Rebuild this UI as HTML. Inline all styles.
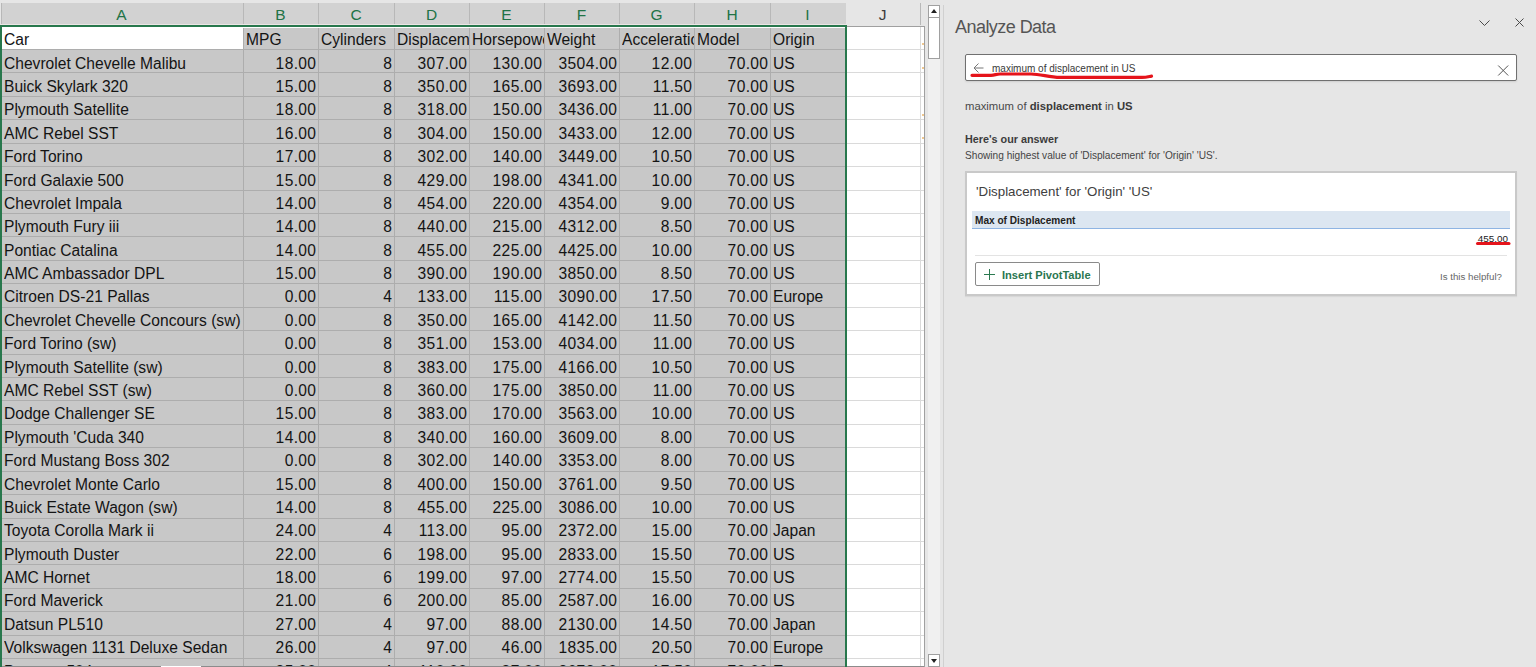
<!DOCTYPE html><html><head><meta charset="utf-8"><style>
*{margin:0;padding:0;box-sizing:border-box}
html,body{width:1536px;height:667px;overflow:hidden;background:#e6e6e6;font-family:"Liberation Sans",sans-serif;position:relative}
.a{position:absolute}
.t{position:absolute;white-space:nowrap;overflow:hidden;font-size:15.6px;line-height:18px;color:#141414}
.r{text-align:right}
.hl{position:absolute;font-size:15.5px;line-height:18px;text-align:center;color:#217346}

</style></head><body>
<div class="a" style="left:0;top:0;width:925px;height:3px;background:#e6e6e6"></div>
<div class="a" style="left:0;top:3px;width:846px;height:22px;background:#d2d2d2"></div>
<div class="a" style="left:846px;top:3px;width:79px;height:23px;background:#e6e6e6"></div>
<div class="a" style="left:243px;top:3px;width:1px;height:22px;background:#b8b8b8"></div>
<div class="a" style="left:318px;top:3px;width:1px;height:22px;background:#b8b8b8"></div>
<div class="a" style="left:394px;top:3px;width:1px;height:22px;background:#b8b8b8"></div>
<div class="a" style="left:469px;top:3px;width:1px;height:22px;background:#b8b8b8"></div>
<div class="a" style="left:544px;top:3px;width:1px;height:22px;background:#b8b8b8"></div>
<div class="a" style="left:619px;top:3px;width:1px;height:22px;background:#b8b8b8"></div>
<div class="a" style="left:694px;top:3px;width:1px;height:22px;background:#b8b8b8"></div>
<div class="a" style="left:770px;top:3px;width:1px;height:22px;background:#b8b8b8"></div>
<div class="a" style="left:920px;top:3px;width:1px;height:22px;background:#b8b8b8"></div>
<div class="a" style="left:0;top:3px;width:1px;height:22px;background:#e6e6e6"></div>
<div class="a" style="left:1px;top:3px;width:1px;height:22px;background:#b8b8b8"></div>
<div class="hl" style="left:0px;top:6px;width:243px;color:#217346">A</div>
<div class="hl" style="left:243px;top:6px;width:75px;color:#217346">B</div>
<div class="hl" style="left:318px;top:6px;width:76px;color:#217346">C</div>
<div class="hl" style="left:394px;top:6px;width:75px;color:#217346">D</div>
<div class="hl" style="left:469px;top:6px;width:75px;color:#217346">E</div>
<div class="hl" style="left:544px;top:6px;width:75px;color:#217346">F</div>
<div class="hl" style="left:619px;top:6px;width:75px;color:#217346">G</div>
<div class="hl" style="left:694px;top:6px;width:76px;color:#217346">H</div>
<div class="hl" style="left:770px;top:6px;width:75px;color:#217346">I</div>
<div class="hl" style="left:845px;top:6px;width:75px;color:#3c3c3c">J</div>
<div class="a" style="left:0;top:27px;width:924px;height:639px;background:#fff"></div>
<div class="a" style="left:2px;top:28px;width:843px;height:638px;background:#c8c8c8"></div>
<div class="a" style="left:2px;top:27px;width:241px;height:22px;background:#fff"></div>
<div class="a" style="left:847px;top:49px;width:77px;height:1px;background:#dadada"></div>
<div class="a" style="left:2px;top:49px;width:843px;height:1px;background:#adadad"></div>
<div class="a" style="left:847px;top:72px;width:77px;height:1px;background:#dadada"></div>
<div class="a" style="left:2px;top:72px;width:843px;height:1px;background:#adadad"></div>
<div class="a" style="left:847px;top:96px;width:77px;height:1px;background:#dadada"></div>
<div class="a" style="left:2px;top:96px;width:843px;height:1px;background:#adadad"></div>
<div class="a" style="left:847px;top:119px;width:77px;height:1px;background:#dadada"></div>
<div class="a" style="left:2px;top:119px;width:843px;height:1px;background:#adadad"></div>
<div class="a" style="left:847px;top:143px;width:77px;height:1px;background:#dadada"></div>
<div class="a" style="left:2px;top:143px;width:843px;height:1px;background:#adadad"></div>
<div class="a" style="left:847px;top:166px;width:77px;height:1px;background:#dadada"></div>
<div class="a" style="left:2px;top:166px;width:843px;height:1px;background:#adadad"></div>
<div class="a" style="left:847px;top:190px;width:77px;height:1px;background:#dadada"></div>
<div class="a" style="left:2px;top:190px;width:843px;height:1px;background:#adadad"></div>
<div class="a" style="left:847px;top:213px;width:77px;height:1px;background:#dadada"></div>
<div class="a" style="left:2px;top:213px;width:843px;height:1px;background:#adadad"></div>
<div class="a" style="left:847px;top:236px;width:77px;height:1px;background:#dadada"></div>
<div class="a" style="left:2px;top:236px;width:843px;height:1px;background:#adadad"></div>
<div class="a" style="left:847px;top:260px;width:77px;height:1px;background:#dadada"></div>
<div class="a" style="left:2px;top:260px;width:843px;height:1px;background:#adadad"></div>
<div class="a" style="left:847px;top:283px;width:77px;height:1px;background:#dadada"></div>
<div class="a" style="left:2px;top:283px;width:843px;height:1px;background:#adadad"></div>
<div class="a" style="left:847px;top:307px;width:77px;height:1px;background:#dadada"></div>
<div class="a" style="left:2px;top:307px;width:843px;height:1px;background:#adadad"></div>
<div class="a" style="left:847px;top:330px;width:77px;height:1px;background:#dadada"></div>
<div class="a" style="left:2px;top:330px;width:843px;height:1px;background:#adadad"></div>
<div class="a" style="left:847px;top:354px;width:77px;height:1px;background:#dadada"></div>
<div class="a" style="left:2px;top:354px;width:843px;height:1px;background:#adadad"></div>
<div class="a" style="left:847px;top:377px;width:77px;height:1px;background:#dadada"></div>
<div class="a" style="left:2px;top:377px;width:843px;height:1px;background:#adadad"></div>
<div class="a" style="left:847px;top:400px;width:77px;height:1px;background:#dadada"></div>
<div class="a" style="left:2px;top:400px;width:843px;height:1px;background:#adadad"></div>
<div class="a" style="left:847px;top:424px;width:77px;height:1px;background:#dadada"></div>
<div class="a" style="left:2px;top:424px;width:843px;height:1px;background:#adadad"></div>
<div class="a" style="left:847px;top:447px;width:77px;height:1px;background:#dadada"></div>
<div class="a" style="left:2px;top:447px;width:843px;height:1px;background:#adadad"></div>
<div class="a" style="left:847px;top:471px;width:77px;height:1px;background:#dadada"></div>
<div class="a" style="left:2px;top:471px;width:843px;height:1px;background:#adadad"></div>
<div class="a" style="left:847px;top:494px;width:77px;height:1px;background:#dadada"></div>
<div class="a" style="left:2px;top:494px;width:843px;height:1px;background:#adadad"></div>
<div class="a" style="left:847px;top:518px;width:77px;height:1px;background:#dadada"></div>
<div class="a" style="left:2px;top:518px;width:843px;height:1px;background:#adadad"></div>
<div class="a" style="left:847px;top:541px;width:77px;height:1px;background:#dadada"></div>
<div class="a" style="left:2px;top:541px;width:843px;height:1px;background:#adadad"></div>
<div class="a" style="left:847px;top:564px;width:77px;height:1px;background:#dadada"></div>
<div class="a" style="left:2px;top:564px;width:843px;height:1px;background:#adadad"></div>
<div class="a" style="left:847px;top:588px;width:77px;height:1px;background:#dadada"></div>
<div class="a" style="left:2px;top:588px;width:843px;height:1px;background:#adadad"></div>
<div class="a" style="left:847px;top:611px;width:77px;height:1px;background:#dadada"></div>
<div class="a" style="left:2px;top:611px;width:843px;height:1px;background:#adadad"></div>
<div class="a" style="left:847px;top:635px;width:77px;height:1px;background:#dadada"></div>
<div class="a" style="left:2px;top:635px;width:843px;height:1px;background:#adadad"></div>
<div class="a" style="left:847px;top:658px;width:77px;height:1px;background:#dadada"></div>
<div class="a" style="left:2px;top:658px;width:843px;height:1px;background:#adadad"></div>
<div class="a" style="left:243px;top:28px;width:1px;height:638px;background:#adadad"></div>
<div class="a" style="left:318px;top:28px;width:1px;height:638px;background:#adadad"></div>
<div class="a" style="left:394px;top:28px;width:1px;height:638px;background:#adadad"></div>
<div class="a" style="left:469px;top:28px;width:1px;height:638px;background:#adadad"></div>
<div class="a" style="left:544px;top:28px;width:1px;height:638px;background:#adadad"></div>
<div class="a" style="left:619px;top:28px;width:1px;height:638px;background:#adadad"></div>
<div class="a" style="left:694px;top:28px;width:1px;height:638px;background:#adadad"></div>
<div class="a" style="left:770px;top:28px;width:1px;height:638px;background:#adadad"></div>
<div class="a" style="left:920px;top:27px;width:1px;height:639px;background:#dadada"></div>
<div class="t" style="left:4px;top:31px;width:240px">Car</div>
<div class="t" style="left:246px;top:31px;width:72px">MPG</div>
<div class="t" style="left:321px;top:31px;width:73px">Cylinders</div>
<div class="t" style="left:397px;top:31px;width:72px">Displacement</div>
<div class="t" style="left:472px;top:31px;width:72px">Horsepower</div>
<div class="t" style="left:547px;top:31px;width:72px">Weight</div>
<div class="t" style="left:622px;top:31px;width:72px">Acceleration</div>
<div class="t" style="left:697px;top:31px;width:73px">Model</div>
<div class="t" style="left:773px;top:31px;width:72px">Origin</div>
<div class="t" style="left:4px;top:55px;width:240px">Chevrolet Chevelle Malibu</div>
<div class="t r" style="left:244px;top:55px;width:72.4px;letter-spacing:0.35px">18.00</div>
<div class="t r" style="left:319px;top:55px;width:73.4px;letter-spacing:0.35px">8</div>
<div class="t r" style="left:395px;top:55px;width:72.4px;letter-spacing:0.35px">307.00</div>
<div class="t r" style="left:470px;top:55px;width:72.4px;letter-spacing:0.35px">130.00</div>
<div class="t r" style="left:545px;top:55px;width:72.4px;letter-spacing:0.35px">3504.00</div>
<div class="t r" style="left:620px;top:55px;width:72.4px;letter-spacing:0.35px">12.00</div>
<div class="t r" style="left:695px;top:55px;width:73.4px;letter-spacing:0.35px">70.00</div>
<div class="t" style="left:773px;top:55px;width:72px">US</div>
<div class="t" style="left:4px;top:78px;width:240px">Buick Skylark 320</div>
<div class="t r" style="left:244px;top:78px;width:72.4px;letter-spacing:0.35px">15.00</div>
<div class="t r" style="left:319px;top:78px;width:73.4px;letter-spacing:0.35px">8</div>
<div class="t r" style="left:395px;top:78px;width:72.4px;letter-spacing:0.35px">350.00</div>
<div class="t r" style="left:470px;top:78px;width:72.4px;letter-spacing:0.35px">165.00</div>
<div class="t r" style="left:545px;top:78px;width:72.4px;letter-spacing:0.35px">3693.00</div>
<div class="t r" style="left:620px;top:78px;width:72.4px;letter-spacing:0.35px">11.50</div>
<div class="t r" style="left:695px;top:78px;width:73.4px;letter-spacing:0.35px">70.00</div>
<div class="t" style="left:773px;top:78px;width:72px">US</div>
<div class="t" style="left:4px;top:101px;width:240px">Plymouth Satellite</div>
<div class="t r" style="left:244px;top:101px;width:72.4px;letter-spacing:0.35px">18.00</div>
<div class="t r" style="left:319px;top:101px;width:73.4px;letter-spacing:0.35px">8</div>
<div class="t r" style="left:395px;top:101px;width:72.4px;letter-spacing:0.35px">318.00</div>
<div class="t r" style="left:470px;top:101px;width:72.4px;letter-spacing:0.35px">150.00</div>
<div class="t r" style="left:545px;top:101px;width:72.4px;letter-spacing:0.35px">3436.00</div>
<div class="t r" style="left:620px;top:101px;width:72.4px;letter-spacing:0.35px">11.00</div>
<div class="t r" style="left:695px;top:101px;width:73.4px;letter-spacing:0.35px">70.00</div>
<div class="t" style="left:773px;top:101px;width:72px">US</div>
<div class="t" style="left:4px;top:125px;width:240px">AMC Rebel SST</div>
<div class="t r" style="left:244px;top:125px;width:72.4px;letter-spacing:0.35px">16.00</div>
<div class="t r" style="left:319px;top:125px;width:73.4px;letter-spacing:0.35px">8</div>
<div class="t r" style="left:395px;top:125px;width:72.4px;letter-spacing:0.35px">304.00</div>
<div class="t r" style="left:470px;top:125px;width:72.4px;letter-spacing:0.35px">150.00</div>
<div class="t r" style="left:545px;top:125px;width:72.4px;letter-spacing:0.35px">3433.00</div>
<div class="t r" style="left:620px;top:125px;width:72.4px;letter-spacing:0.35px">12.00</div>
<div class="t r" style="left:695px;top:125px;width:73.4px;letter-spacing:0.35px">70.00</div>
<div class="t" style="left:773px;top:125px;width:72px">US</div>
<div class="t" style="left:4px;top:148px;width:240px">Ford Torino</div>
<div class="t r" style="left:244px;top:148px;width:72.4px;letter-spacing:0.35px">17.00</div>
<div class="t r" style="left:319px;top:148px;width:73.4px;letter-spacing:0.35px">8</div>
<div class="t r" style="left:395px;top:148px;width:72.4px;letter-spacing:0.35px">302.00</div>
<div class="t r" style="left:470px;top:148px;width:72.4px;letter-spacing:0.35px">140.00</div>
<div class="t r" style="left:545px;top:148px;width:72.4px;letter-spacing:0.35px">3449.00</div>
<div class="t r" style="left:620px;top:148px;width:72.4px;letter-spacing:0.35px">10.50</div>
<div class="t r" style="left:695px;top:148px;width:73.4px;letter-spacing:0.35px">70.00</div>
<div class="t" style="left:773px;top:148px;width:72px">US</div>
<div class="t" style="left:4px;top:172px;width:240px">Ford Galaxie 500</div>
<div class="t r" style="left:244px;top:172px;width:72.4px;letter-spacing:0.35px">15.00</div>
<div class="t r" style="left:319px;top:172px;width:73.4px;letter-spacing:0.35px">8</div>
<div class="t r" style="left:395px;top:172px;width:72.4px;letter-spacing:0.35px">429.00</div>
<div class="t r" style="left:470px;top:172px;width:72.4px;letter-spacing:0.35px">198.00</div>
<div class="t r" style="left:545px;top:172px;width:72.4px;letter-spacing:0.35px">4341.00</div>
<div class="t r" style="left:620px;top:172px;width:72.4px;letter-spacing:0.35px">10.00</div>
<div class="t r" style="left:695px;top:172px;width:73.4px;letter-spacing:0.35px">70.00</div>
<div class="t" style="left:773px;top:172px;width:72px">US</div>
<div class="t" style="left:4px;top:195px;width:240px">Chevrolet Impala</div>
<div class="t r" style="left:244px;top:195px;width:72.4px;letter-spacing:0.35px">14.00</div>
<div class="t r" style="left:319px;top:195px;width:73.4px;letter-spacing:0.35px">8</div>
<div class="t r" style="left:395px;top:195px;width:72.4px;letter-spacing:0.35px">454.00</div>
<div class="t r" style="left:470px;top:195px;width:72.4px;letter-spacing:0.35px">220.00</div>
<div class="t r" style="left:545px;top:195px;width:72.4px;letter-spacing:0.35px">4354.00</div>
<div class="t r" style="left:620px;top:195px;width:72.4px;letter-spacing:0.35px">9.00</div>
<div class="t r" style="left:695px;top:195px;width:73.4px;letter-spacing:0.35px">70.00</div>
<div class="t" style="left:773px;top:195px;width:72px">US</div>
<div class="t" style="left:4px;top:218px;width:240px">Plymouth Fury iii</div>
<div class="t r" style="left:244px;top:218px;width:72.4px;letter-spacing:0.35px">14.00</div>
<div class="t r" style="left:319px;top:218px;width:73.4px;letter-spacing:0.35px">8</div>
<div class="t r" style="left:395px;top:218px;width:72.4px;letter-spacing:0.35px">440.00</div>
<div class="t r" style="left:470px;top:218px;width:72.4px;letter-spacing:0.35px">215.00</div>
<div class="t r" style="left:545px;top:218px;width:72.4px;letter-spacing:0.35px">4312.00</div>
<div class="t r" style="left:620px;top:218px;width:72.4px;letter-spacing:0.35px">8.50</div>
<div class="t r" style="left:695px;top:218px;width:73.4px;letter-spacing:0.35px">70.00</div>
<div class="t" style="left:773px;top:218px;width:72px">US</div>
<div class="t" style="left:4px;top:242px;width:240px">Pontiac Catalina</div>
<div class="t r" style="left:244px;top:242px;width:72.4px;letter-spacing:0.35px">14.00</div>
<div class="t r" style="left:319px;top:242px;width:73.4px;letter-spacing:0.35px">8</div>
<div class="t r" style="left:395px;top:242px;width:72.4px;letter-spacing:0.35px">455.00</div>
<div class="t r" style="left:470px;top:242px;width:72.4px;letter-spacing:0.35px">225.00</div>
<div class="t r" style="left:545px;top:242px;width:72.4px;letter-spacing:0.35px">4425.00</div>
<div class="t r" style="left:620px;top:242px;width:72.4px;letter-spacing:0.35px">10.00</div>
<div class="t r" style="left:695px;top:242px;width:73.4px;letter-spacing:0.35px">70.00</div>
<div class="t" style="left:773px;top:242px;width:72px">US</div>
<div class="t" style="left:4px;top:265px;width:240px">AMC Ambassador DPL</div>
<div class="t r" style="left:244px;top:265px;width:72.4px;letter-spacing:0.35px">15.00</div>
<div class="t r" style="left:319px;top:265px;width:73.4px;letter-spacing:0.35px">8</div>
<div class="t r" style="left:395px;top:265px;width:72.4px;letter-spacing:0.35px">390.00</div>
<div class="t r" style="left:470px;top:265px;width:72.4px;letter-spacing:0.35px">190.00</div>
<div class="t r" style="left:545px;top:265px;width:72.4px;letter-spacing:0.35px">3850.00</div>
<div class="t r" style="left:620px;top:265px;width:72.4px;letter-spacing:0.35px">8.50</div>
<div class="t r" style="left:695px;top:265px;width:73.4px;letter-spacing:0.35px">70.00</div>
<div class="t" style="left:773px;top:265px;width:72px">US</div>
<div class="t" style="left:4px;top:288px;width:240px">Citroen DS-21 Pallas</div>
<div class="t r" style="left:244px;top:288px;width:72.4px;letter-spacing:0.35px">0.00</div>
<div class="t r" style="left:319px;top:288px;width:73.4px;letter-spacing:0.35px">4</div>
<div class="t r" style="left:395px;top:288px;width:72.4px;letter-spacing:0.35px">133.00</div>
<div class="t r" style="left:470px;top:288px;width:72.4px;letter-spacing:0.35px">115.00</div>
<div class="t r" style="left:545px;top:288px;width:72.4px;letter-spacing:0.35px">3090.00</div>
<div class="t r" style="left:620px;top:288px;width:72.4px;letter-spacing:0.35px">17.50</div>
<div class="t r" style="left:695px;top:288px;width:73.4px;letter-spacing:0.35px">70.00</div>
<div class="t" style="left:773px;top:288px;width:72px">Europe</div>
<div class="t" style="left:4px;top:312px;width:240px">Chevrolet Chevelle Concours (sw)</div>
<div class="t r" style="left:244px;top:312px;width:72.4px;letter-spacing:0.35px">0.00</div>
<div class="t r" style="left:319px;top:312px;width:73.4px;letter-spacing:0.35px">8</div>
<div class="t r" style="left:395px;top:312px;width:72.4px;letter-spacing:0.35px">350.00</div>
<div class="t r" style="left:470px;top:312px;width:72.4px;letter-spacing:0.35px">165.00</div>
<div class="t r" style="left:545px;top:312px;width:72.4px;letter-spacing:0.35px">4142.00</div>
<div class="t r" style="left:620px;top:312px;width:72.4px;letter-spacing:0.35px">11.50</div>
<div class="t r" style="left:695px;top:312px;width:73.4px;letter-spacing:0.35px">70.00</div>
<div class="t" style="left:773px;top:312px;width:72px">US</div>
<div class="t" style="left:4px;top:335px;width:240px">Ford Torino (sw)</div>
<div class="t r" style="left:244px;top:335px;width:72.4px;letter-spacing:0.35px">0.00</div>
<div class="t r" style="left:319px;top:335px;width:73.4px;letter-spacing:0.35px">8</div>
<div class="t r" style="left:395px;top:335px;width:72.4px;letter-spacing:0.35px">351.00</div>
<div class="t r" style="left:470px;top:335px;width:72.4px;letter-spacing:0.35px">153.00</div>
<div class="t r" style="left:545px;top:335px;width:72.4px;letter-spacing:0.35px">4034.00</div>
<div class="t r" style="left:620px;top:335px;width:72.4px;letter-spacing:0.35px">11.00</div>
<div class="t r" style="left:695px;top:335px;width:73.4px;letter-spacing:0.35px">70.00</div>
<div class="t" style="left:773px;top:335px;width:72px">US</div>
<div class="t" style="left:4px;top:359px;width:240px">Plymouth Satellite (sw)</div>
<div class="t r" style="left:244px;top:359px;width:72.4px;letter-spacing:0.35px">0.00</div>
<div class="t r" style="left:319px;top:359px;width:73.4px;letter-spacing:0.35px">8</div>
<div class="t r" style="left:395px;top:359px;width:72.4px;letter-spacing:0.35px">383.00</div>
<div class="t r" style="left:470px;top:359px;width:72.4px;letter-spacing:0.35px">175.00</div>
<div class="t r" style="left:545px;top:359px;width:72.4px;letter-spacing:0.35px">4166.00</div>
<div class="t r" style="left:620px;top:359px;width:72.4px;letter-spacing:0.35px">10.50</div>
<div class="t r" style="left:695px;top:359px;width:73.4px;letter-spacing:0.35px">70.00</div>
<div class="t" style="left:773px;top:359px;width:72px">US</div>
<div class="t" style="left:4px;top:382px;width:240px">AMC Rebel SST (sw)</div>
<div class="t r" style="left:244px;top:382px;width:72.4px;letter-spacing:0.35px">0.00</div>
<div class="t r" style="left:319px;top:382px;width:73.4px;letter-spacing:0.35px">8</div>
<div class="t r" style="left:395px;top:382px;width:72.4px;letter-spacing:0.35px">360.00</div>
<div class="t r" style="left:470px;top:382px;width:72.4px;letter-spacing:0.35px">175.00</div>
<div class="t r" style="left:545px;top:382px;width:72.4px;letter-spacing:0.35px">3850.00</div>
<div class="t r" style="left:620px;top:382px;width:72.4px;letter-spacing:0.35px">11.00</div>
<div class="t r" style="left:695px;top:382px;width:73.4px;letter-spacing:0.35px">70.00</div>
<div class="t" style="left:773px;top:382px;width:72px">US</div>
<div class="t" style="left:4px;top:405px;width:240px">Dodge Challenger SE</div>
<div class="t r" style="left:244px;top:405px;width:72.4px;letter-spacing:0.35px">15.00</div>
<div class="t r" style="left:319px;top:405px;width:73.4px;letter-spacing:0.35px">8</div>
<div class="t r" style="left:395px;top:405px;width:72.4px;letter-spacing:0.35px">383.00</div>
<div class="t r" style="left:470px;top:405px;width:72.4px;letter-spacing:0.35px">170.00</div>
<div class="t r" style="left:545px;top:405px;width:72.4px;letter-spacing:0.35px">3563.00</div>
<div class="t r" style="left:620px;top:405px;width:72.4px;letter-spacing:0.35px">10.00</div>
<div class="t r" style="left:695px;top:405px;width:73.4px;letter-spacing:0.35px">70.00</div>
<div class="t" style="left:773px;top:405px;width:72px">US</div>
<div class="t" style="left:4px;top:429px;width:240px">Plymouth 'Cuda 340</div>
<div class="t r" style="left:244px;top:429px;width:72.4px;letter-spacing:0.35px">14.00</div>
<div class="t r" style="left:319px;top:429px;width:73.4px;letter-spacing:0.35px">8</div>
<div class="t r" style="left:395px;top:429px;width:72.4px;letter-spacing:0.35px">340.00</div>
<div class="t r" style="left:470px;top:429px;width:72.4px;letter-spacing:0.35px">160.00</div>
<div class="t r" style="left:545px;top:429px;width:72.4px;letter-spacing:0.35px">3609.00</div>
<div class="t r" style="left:620px;top:429px;width:72.4px;letter-spacing:0.35px">8.00</div>
<div class="t r" style="left:695px;top:429px;width:73.4px;letter-spacing:0.35px">70.00</div>
<div class="t" style="left:773px;top:429px;width:72px">US</div>
<div class="t" style="left:4px;top:452px;width:240px">Ford Mustang Boss 302</div>
<div class="t r" style="left:244px;top:452px;width:72.4px;letter-spacing:0.35px">0.00</div>
<div class="t r" style="left:319px;top:452px;width:73.4px;letter-spacing:0.35px">8</div>
<div class="t r" style="left:395px;top:452px;width:72.4px;letter-spacing:0.35px">302.00</div>
<div class="t r" style="left:470px;top:452px;width:72.4px;letter-spacing:0.35px">140.00</div>
<div class="t r" style="left:545px;top:452px;width:72.4px;letter-spacing:0.35px">3353.00</div>
<div class="t r" style="left:620px;top:452px;width:72.4px;letter-spacing:0.35px">8.00</div>
<div class="t r" style="left:695px;top:452px;width:73.4px;letter-spacing:0.35px">70.00</div>
<div class="t" style="left:773px;top:452px;width:72px">US</div>
<div class="t" style="left:4px;top:476px;width:240px">Chevrolet Monte Carlo</div>
<div class="t r" style="left:244px;top:476px;width:72.4px;letter-spacing:0.35px">15.00</div>
<div class="t r" style="left:319px;top:476px;width:73.4px;letter-spacing:0.35px">8</div>
<div class="t r" style="left:395px;top:476px;width:72.4px;letter-spacing:0.35px">400.00</div>
<div class="t r" style="left:470px;top:476px;width:72.4px;letter-spacing:0.35px">150.00</div>
<div class="t r" style="left:545px;top:476px;width:72.4px;letter-spacing:0.35px">3761.00</div>
<div class="t r" style="left:620px;top:476px;width:72.4px;letter-spacing:0.35px">9.50</div>
<div class="t r" style="left:695px;top:476px;width:73.4px;letter-spacing:0.35px">70.00</div>
<div class="t" style="left:773px;top:476px;width:72px">US</div>
<div class="t" style="left:4px;top:499px;width:240px">Buick Estate Wagon (sw)</div>
<div class="t r" style="left:244px;top:499px;width:72.4px;letter-spacing:0.35px">14.00</div>
<div class="t r" style="left:319px;top:499px;width:73.4px;letter-spacing:0.35px">8</div>
<div class="t r" style="left:395px;top:499px;width:72.4px;letter-spacing:0.35px">455.00</div>
<div class="t r" style="left:470px;top:499px;width:72.4px;letter-spacing:0.35px">225.00</div>
<div class="t r" style="left:545px;top:499px;width:72.4px;letter-spacing:0.35px">3086.00</div>
<div class="t r" style="left:620px;top:499px;width:72.4px;letter-spacing:0.35px">10.00</div>
<div class="t r" style="left:695px;top:499px;width:73.4px;letter-spacing:0.35px">70.00</div>
<div class="t" style="left:773px;top:499px;width:72px">US</div>
<div class="t" style="left:4px;top:522px;width:240px">Toyota Corolla Mark ii</div>
<div class="t r" style="left:244px;top:522px;width:72.4px;letter-spacing:0.35px">24.00</div>
<div class="t r" style="left:319px;top:522px;width:73.4px;letter-spacing:0.35px">4</div>
<div class="t r" style="left:395px;top:522px;width:72.4px;letter-spacing:0.35px">113.00</div>
<div class="t r" style="left:470px;top:522px;width:72.4px;letter-spacing:0.35px">95.00</div>
<div class="t r" style="left:545px;top:522px;width:72.4px;letter-spacing:0.35px">2372.00</div>
<div class="t r" style="left:620px;top:522px;width:72.4px;letter-spacing:0.35px">15.00</div>
<div class="t r" style="left:695px;top:522px;width:73.4px;letter-spacing:0.35px">70.00</div>
<div class="t" style="left:773px;top:522px;width:72px">Japan</div>
<div class="t" style="left:4px;top:546px;width:240px">Plymouth Duster</div>
<div class="t r" style="left:244px;top:546px;width:72.4px;letter-spacing:0.35px">22.00</div>
<div class="t r" style="left:319px;top:546px;width:73.4px;letter-spacing:0.35px">6</div>
<div class="t r" style="left:395px;top:546px;width:72.4px;letter-spacing:0.35px">198.00</div>
<div class="t r" style="left:470px;top:546px;width:72.4px;letter-spacing:0.35px">95.00</div>
<div class="t r" style="left:545px;top:546px;width:72.4px;letter-spacing:0.35px">2833.00</div>
<div class="t r" style="left:620px;top:546px;width:72.4px;letter-spacing:0.35px">15.50</div>
<div class="t r" style="left:695px;top:546px;width:73.4px;letter-spacing:0.35px">70.00</div>
<div class="t" style="left:773px;top:546px;width:72px">US</div>
<div class="t" style="left:4px;top:569px;width:240px">AMC Hornet</div>
<div class="t r" style="left:244px;top:569px;width:72.4px;letter-spacing:0.35px">18.00</div>
<div class="t r" style="left:319px;top:569px;width:73.4px;letter-spacing:0.35px">6</div>
<div class="t r" style="left:395px;top:569px;width:72.4px;letter-spacing:0.35px">199.00</div>
<div class="t r" style="left:470px;top:569px;width:72.4px;letter-spacing:0.35px">97.00</div>
<div class="t r" style="left:545px;top:569px;width:72.4px;letter-spacing:0.35px">2774.00</div>
<div class="t r" style="left:620px;top:569px;width:72.4px;letter-spacing:0.35px">15.50</div>
<div class="t r" style="left:695px;top:569px;width:73.4px;letter-spacing:0.35px">70.00</div>
<div class="t" style="left:773px;top:569px;width:72px">US</div>
<div class="t" style="left:4px;top:592px;width:240px">Ford Maverick</div>
<div class="t r" style="left:244px;top:592px;width:72.4px;letter-spacing:0.35px">21.00</div>
<div class="t r" style="left:319px;top:592px;width:73.4px;letter-spacing:0.35px">6</div>
<div class="t r" style="left:395px;top:592px;width:72.4px;letter-spacing:0.35px">200.00</div>
<div class="t r" style="left:470px;top:592px;width:72.4px;letter-spacing:0.35px">85.00</div>
<div class="t r" style="left:545px;top:592px;width:72.4px;letter-spacing:0.35px">2587.00</div>
<div class="t r" style="left:620px;top:592px;width:72.4px;letter-spacing:0.35px">16.00</div>
<div class="t r" style="left:695px;top:592px;width:73.4px;letter-spacing:0.35px">70.00</div>
<div class="t" style="left:773px;top:592px;width:72px">US</div>
<div class="t" style="left:4px;top:616px;width:240px">Datsun PL510</div>
<div class="t r" style="left:244px;top:616px;width:72.4px;letter-spacing:0.35px">27.00</div>
<div class="t r" style="left:319px;top:616px;width:73.4px;letter-spacing:0.35px">4</div>
<div class="t r" style="left:395px;top:616px;width:72.4px;letter-spacing:0.35px">97.00</div>
<div class="t r" style="left:470px;top:616px;width:72.4px;letter-spacing:0.35px">88.00</div>
<div class="t r" style="left:545px;top:616px;width:72.4px;letter-spacing:0.35px">2130.00</div>
<div class="t r" style="left:620px;top:616px;width:72.4px;letter-spacing:0.35px">14.50</div>
<div class="t r" style="left:695px;top:616px;width:73.4px;letter-spacing:0.35px">70.00</div>
<div class="t" style="left:773px;top:616px;width:72px">Japan</div>
<div class="t" style="left:4px;top:639px;width:240px">Volkswagen 1131 Deluxe Sedan</div>
<div class="t r" style="left:244px;top:639px;width:72.4px;letter-spacing:0.35px">26.00</div>
<div class="t r" style="left:319px;top:639px;width:73.4px;letter-spacing:0.35px">4</div>
<div class="t r" style="left:395px;top:639px;width:72.4px;letter-spacing:0.35px">97.00</div>
<div class="t r" style="left:470px;top:639px;width:72.4px;letter-spacing:0.35px">46.00</div>
<div class="t r" style="left:545px;top:639px;width:72.4px;letter-spacing:0.35px">1835.00</div>
<div class="t r" style="left:620px;top:639px;width:72.4px;letter-spacing:0.35px">20.50</div>
<div class="t r" style="left:695px;top:639px;width:73.4px;letter-spacing:0.35px">70.00</div>
<div class="t" style="left:773px;top:639px;width:72px">Europe</div>
<div class="t" style="left:4px;top:663px;width:240px">Peugeot 504</div>
<div class="t r" style="left:244px;top:663px;width:72.4px;letter-spacing:0.35px">25.00</div>
<div class="t r" style="left:319px;top:663px;width:73.4px;letter-spacing:0.35px">4</div>
<div class="t r" style="left:395px;top:663px;width:72.4px;letter-spacing:0.35px">110.00</div>
<div class="t r" style="left:470px;top:663px;width:72.4px;letter-spacing:0.35px">87.00</div>
<div class="t r" style="left:545px;top:663px;width:72.4px;letter-spacing:0.35px">2672.00</div>
<div class="t r" style="left:620px;top:663px;width:72.4px;letter-spacing:0.35px">17.50</div>
<div class="t r" style="left:695px;top:663px;width:73.4px;letter-spacing:0.35px">70.00</div>
<div class="t" style="left:773px;top:663px;width:72px">Europe</div>
<div class="a" style="left:0;top:666px;width:925px;height:1px;background:#8c8c8c"></div>
<div class="a" style="left:161px;top:666px;width:40px;height:1px;background:#fff"></div>
<div class="a" style="left:847px;top:26px;width:78px;height:1px;background:#a0a0a0"></div>
<div class="a" style="left:924px;top:26px;width:1px;height:641px;background:#a0a0a0"></div>
<div class="a" style="left:0;top:24px;width:847px;height:1px;background:#ece6e6"></div>
<div class="a" style="left:0;top:25px;width:847px;height:2px;background:#28784d"></div>
<div class="a" style="left:0;top:25px;width:2px;height:642px;background:#28784d"></div>
<div class="a" style="left:845px;top:25px;width:2px;height:642px;background:#28784d"></div>
<div class="a" style="left:922px;top:43px;width:2px;height:2px;background:#f0c890"></div>
<div class="a" style="left:922px;top:67px;width:2px;height:2px;background:#f0c890"></div>
<div class="a" style="left:922px;top:114px;width:2px;height:2px;background:#f0c890"></div>
<div class="a" style="left:922px;top:137px;width:2px;height:2px;background:#f0c890"></div>
<div class="a" style="left:925px;top:0;width:18px;height:667px;background:#e6e6e6"></div>
<div class="a" style="left:928px;top:5px;width:12px;height:662px;background:#f0f0f0"></div>
<div class="a" style="left:928px;top:5px;width:12px;height:13px;background:#fff;border:1px solid #a0a0a0"></div>
<div class="a" style="left:931px;top:9px;width:0;height:0;border-left:3px solid transparent;border-right:3px solid transparent;border-bottom:4px solid #222"></div>
<div class="a" style="left:928px;top:17px;width:12px;height:42px;background:#fff;border:1px solid #a0a0a0"></div>
<div class="a" style="left:928px;top:654px;width:12px;height:13px;background:#fff;border:1px solid #a0a0a0"></div>
<div class="a" style="left:931px;top:659px;width:0;height:0;border-left:3px solid transparent;border-right:3px solid transparent;border-top:4px solid #222"></div>
<div class="a" style="left:943px;top:5px;width:1px;height:662px;background:#d0d0d0"></div>
<div class="a" style="left:955px;top:16px;font-size:18px;line-height:22px;letter-spacing:-0.55px;color:#555;white-space:nowrap">Analyze Data</div>
<svg class="a" style="left:1470px;top:10px" width="66" height="26" viewBox="0 0 66 26"><path d="M9.5 10.5 L14.5 15.5 L19.5 10.5" fill="none" stroke="#4a4a4a" stroke-width="1"/><path d="M45.5 8.5 L53.5 16.5 M53.5 8.5 L45.5 16.5" fill="none" stroke="#4a4a4a" stroke-width="1"/></svg>
<div class="a" style="left:965px;top:54px;width:552px;height:27px;background:#fff;border:1px solid #707070;border-radius:2px;box-shadow:0 1px 2px rgba(0,0,0,0.1)"></div>
<svg class="a" style="left:970px;top:60px" width="18" height="16" viewBox="0 0 18 16"><path d="M4 8 L13.5 8 M8.5 3.5 L4 8 L8.5 12.5" fill="none" stroke="#777" stroke-width="1"/></svg>
<div class="a" style="left:992px;top:62px;font-size:10px;line-height:13px;color:#3a3a3a;white-space:nowrap">maximum of displacement in US</div>
<svg class="a" style="left:1495px;top:62px" width="16" height="16" viewBox="0 0 16 16"><path d="M3.2 3.5 L13.2 13.5 M13.2 3.5 L3.2 13.5" fill="none" stroke="#555" stroke-width="1"/></svg>
<svg class="a" style="left:965px;top:70px" width="195" height="12" viewBox="0 0 195 12"><path d="M7 5.3 L26 5.3 C30 5.3 31 4 35 4 L66 4 C76 4 84 7.4 95 7.4 L177 7.4 C181 7.4 184 6.6 186.5 6.2" fill="none" stroke="#e5141b" stroke-width="3.2" stroke-linecap="round"/></svg>
<div class="a" style="left:965px;top:100px;font-size:11.3px;line-height:13px;color:#4a4a4a;white-space:nowrap">maximum of <b style="color:#3a3a3a">displacement</b> in <b style="color:#3a3a3a">US</b></div>
<div class="a" style="left:965px;top:133px;font-size:10.8px;line-height:13px;color:#3c3c3c;font-weight:bold;white-space:nowrap">Here's our answer</div>
<div class="a" style="left:965px;top:149px;font-size:10.15px;line-height:13px;color:#444;white-space:nowrap">Showing highest value of 'Displacement' for 'Origin' 'US'.</div>
<div class="a" style="left:965px;top:171px;width:552px;height:125px;background:#fff;border:2px solid #c9c9c9;box-shadow:0 1px 1px rgba(0,0,0,0.06)"></div>
<div class="a" style="left:976px;top:183px;font-size:13.3px;line-height:17px;color:#404040;white-space:nowrap">'Displacement' for 'Origin' 'US'</div>
<div class="a" style="left:972px;top:211px;width:538px;height:17px;background:#dce6f1"></div>
<div class="a" style="left:972px;top:228px;width:538px;height:1px;background:#8eb4e3"></div>
<div class="a" style="left:975px;top:214px;font-size:10.1px;line-height:13px;color:#222;font-weight:bold;white-space:nowrap">Max of Displacement</div>
<div class="a" style="left:1440px;top:232px;width:68px;text-align:right;font-size:9.9px;line-height:13px;color:#222;white-space:nowrap;text-decoration:underline">455.00</div>
<svg class="a" style="left:1474px;top:240px" width="40" height="8" viewBox="0 0 40 8"><path d="M3.5 3.5 L35 3.5" fill="none" stroke="#e5141b" stroke-width="3" stroke-linecap="round"/></svg>
<div class="a" style="left:975px;top:255px;width:532px;height:1px;background:#e3e3e3"></div>
<div class="a" style="left:975px;top:262px;width:125px;height:24px;border:1px solid #8a8a8a;border-radius:2px;background:#fff"></div>
<svg class="a" style="left:983px;top:268px" width="14" height="14" viewBox="0 0 14 14"><path d="M6.5 1 L6.5 12 M1 6.5 L12 6.5" fill="none" stroke="#2b7a50" stroke-width="1"/></svg>
<div class="a" style="left:1002px;top:268px;font-size:11.1px;line-height:14px;color:#2a7650;font-weight:bold;white-space:nowrap">Insert PivotTable</div>
<div class="a" style="left:1420px;top:270px;width:82px;text-align:right;font-size:9.7px;line-height:13px;color:#666;white-space:nowrap">Is this helpful?</div>
</body></html>
